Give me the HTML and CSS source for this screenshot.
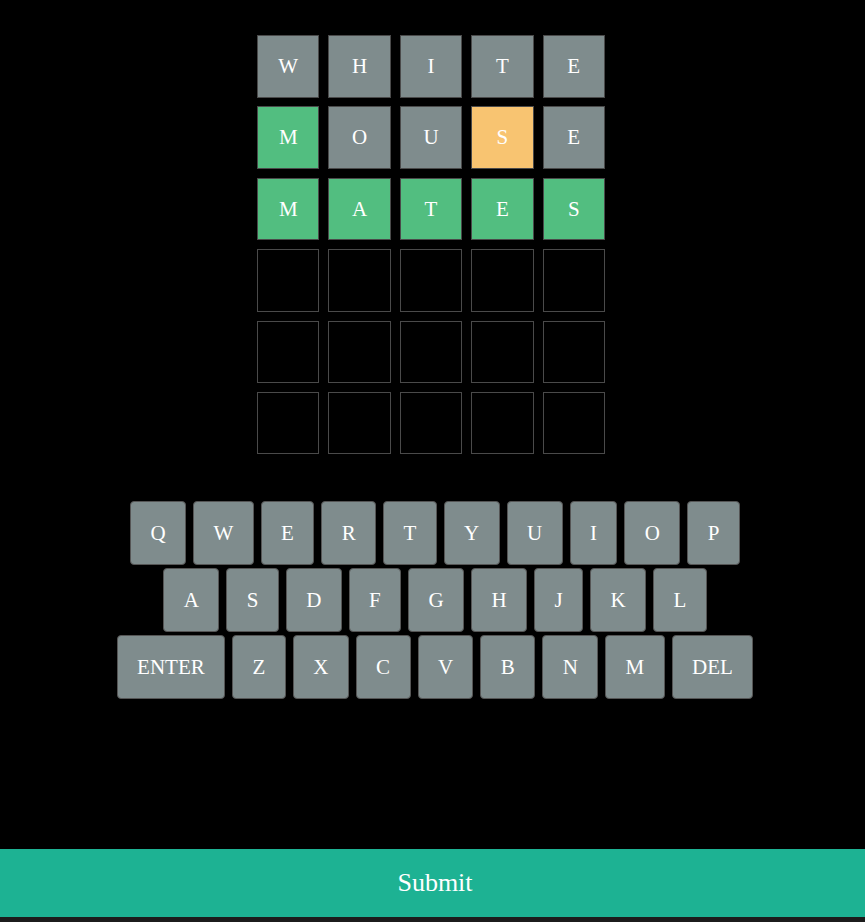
FILE: index.html
```html
<!DOCTYPE html>
<html lang="en">
<head>
<meta charset="utf-8">
<title>Wordle</title>
<link rel="stylesheet" href="styles.css">
</head>
<body>
<div class="page">
  <main class="game">
    <div class="board">
      <div class="row">
        <div class="tile absent">W</div><div class="tile absent">H</div><div class="tile absent">I</div><div class="tile absent">T</div><div class="tile absent">E</div>
      </div>
      <div class="row">
        <div class="tile correct">M</div><div class="tile absent">O</div><div class="tile absent">U</div><div class="tile present">S</div><div class="tile absent">E</div>
      </div>
      <div class="row">
        <div class="tile correct">M</div><div class="tile correct">A</div><div class="tile correct">T</div><div class="tile correct">E</div><div class="tile correct">S</div>
      </div>
      <div class="row">
        <div class="tile"></div><div class="tile"></div><div class="tile"></div><div class="tile"></div><div class="tile"></div>
      </div>
      <div class="row">
        <div class="tile"></div><div class="tile"></div><div class="tile"></div><div class="tile"></div><div class="tile"></div>
      </div>
      <div class="row">
        <div class="tile"></div><div class="tile"></div><div class="tile"></div><div class="tile"></div><div class="tile"></div>
      </div>
    </div>

    <div class="keyboard">
      <div class="key-row">
        <button class="key">Q</button><button class="key">W</button><button class="key">E</button><button class="key">R</button><button class="key">T</button><button class="key">Y</button><button class="key">U</button><button class="key">I</button><button class="key">O</button><button class="key">P</button>
      </div>
      <div class="key-row">
        <button class="key">A</button><button class="key">S</button><button class="key">D</button><button class="key">F</button><button class="key">G</button><button class="key">H</button><button class="key">J</button><button class="key">K</button><button class="key">L</button>
      </div>
      <div class="key-row">
        <button class="key">ENTER</button><button class="key">Z</button><button class="key">X</button><button class="key">C</button><button class="key">V</button><button class="key">B</button><button class="key">N</button><button class="key">M</button><button class="key">DEL</button>
      </div>
    </div>
  </main>

  <footer class="footer">
    <button class="submit">Submit</button>
  </footer>
</div>
</body>
</html>
```

FILE: styles.css
```css
* {
  box-sizing: border-box;
}

html, body {
  margin: 0;
  padding: 0;
  background: #000;
}

body {
  font-family: "Liberation Serif", "Times New Roman", serif;
  color: #fff;
}

.page {
  min-height: 100vh;
  display: flex;
  flex-direction: column;
}

.game {
  display: flex;
  flex-direction: column;
  align-items: center;
  padding-top: 35px;
}

.board {
  display: flex;
  flex-direction: column;
  gap: 8.9px;
  margin-right: 3px;
}

.row {
  display: flex;
  gap: 8.9px;
}

.tile {
  width: 62.5px;
  height: 62.5px;
  border: 1px solid #4a4a4a;
  display: flex;
  align-items: center;
  justify-content: center;
  font-size: 21px;
  color: #fff;
}

.tile.absent {
  background: #7f8c8d;
}

.tile.correct {
  background: #52be80;
}

.tile.present {
  background: #f8c471;
}

.keyboard {
  margin-top: 47px;
  display: flex;
  flex-direction: column;
  gap: 3.5px;
  align-items: center;
  margin-left: 5px;
}

.key-row {
  display: flex;
  gap: 7px;
}

.key {
  height: 63.5px;
  padding: 0 19.4px;
  background: #7f8c8d;
  border: 1px solid #555;
  border-radius: 4px;
  color: #fff;
  font-family: "Liberation Serif", "Times New Roman", serif;
  font-size: 21px;
  display: flex;
  align-items: center;
  justify-content: center;
  cursor: pointer;
}

.footer {
  margin-top: auto;
  border-bottom: 5px solid #1c1c1c;
}

.submit {
  display: block;
  width: 100%;
  height: 68px;
  border: none;
  padding: 0 0 0 5px;
  background: #1db293;
  color: #fff;
  font-family: "Liberation Serif", "Times New Roman", serif;
  font-size: 26px;
  cursor: pointer;
}
```
